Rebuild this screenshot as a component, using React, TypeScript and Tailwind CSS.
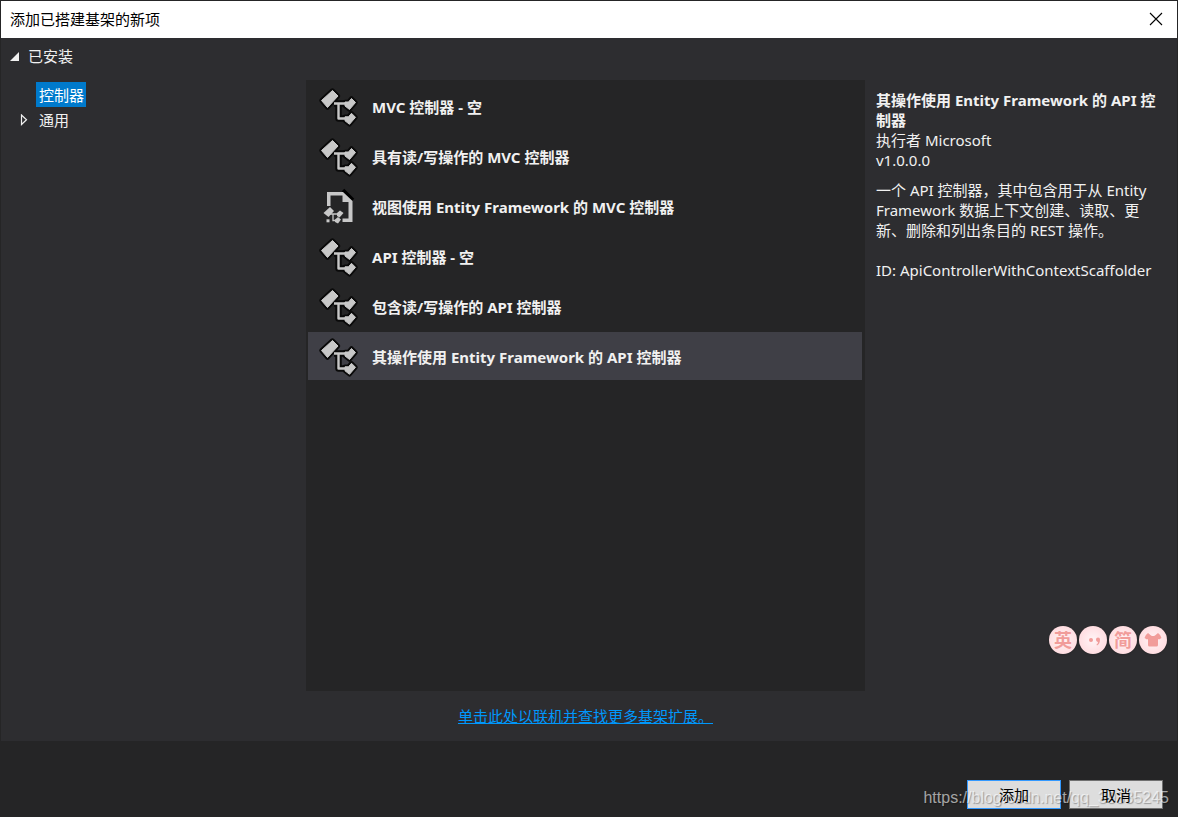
import React, {useState} from "react"
import clsx from "clsx"

type IconKind = "controller" | "view"

interface Scaffold {
    name: string
    icon: IconKind
}

const scaffolds: Scaffold[] = [
    {name: "MVC 控制器 - 空", icon: "controller"},
    {name: "具有读/写操作的 MVC 控制器", icon: "controller"},
    {name: "视图使用 Entity Framework 的 MVC 控制器", icon: "view"},
    {name: "API 控制器 - 空", icon: "controller"},
    {name: "包含读/写操作的 API 控制器", icon: "controller"},
    {name: "其操作使用 Entity Framework 的 API 控制器", icon: "controller"},
]

// Three linked blocks, drawn once as outline and once as fill
function ControllerIcon() {
    const shapes = (
        <>
            <path d="M1.500 14.500 12.500 4.500l5.500 5.500L7.500 21.500z"/>
            <path d="M25 20v-4h3.500l3-3.500 4 4-6 7z"/>
            <path d="M25 34.800v-4h3.500l3-3.500 4 4-6 7z"/>
        </>
    )
    return (
        <svg viewBox="0 0 40 40" className="h-10 w-10 shrink-0 overflow-visible" aria-hidden="true">
            <g fill="#0a0a0a" stroke="#0a0a0a" strokeWidth="4.5" strokeLinejoin="round">
                {shapes}
                <path d="M14 17.500h12M18.500 17.500v15h8" fill="none" strokeWidth="6.500"/>
            </g>
            <g fill="#c8c8c8" stroke="#c8c8c8" strokeWidth="1" strokeLinejoin="round">
                {shapes}
                <path d="M14 17.500h12M18.500 17.500v15h8" fill="none" strokeWidth="2.400"/>
            </g>
        </svg>
    )
}

function ViewIcon() {
    return (
        <svg viewBox="0 0 40 40" className="h-10 w-10 shrink-0" aria-hidden="true">
            <path d="M23 4l10 10" stroke="#000" strokeWidth="3.500"/>
            <path d="M7 20V6h16l9.500 9v21h-10v-3.500h6V16h-6V9.500H10.500V20z" fill="#c8c8c8"/>
            <g fill="#c8c8c8">
                <path d="M3.500 27l6.500-6 4 4-5.500 6z"/>
                <path d="M17 30v-3l3-2.500 3.500 2.500-4 4.500z"/>
                <path d="M15 36v-2.500l3-2.500 3 2.500-3 4z"/>
                <path d="M6.500 33.300h3v3h-3z"/>
                <path d="M9 28h9M13 28v6.500h4" fill="none" stroke="#c8c8c8" strokeWidth="1.300"/>
            </g>
        </svg>
    )
}

function ImeBar() {
    const badge = "flex h-7 w-7 items-center justify-center rounded-full bg-[radial-gradient(#fff4f6,#ffd3d8)] text-lg leading-none font-bold text-[#f19c9a] shadow"
    return (
        <div className="absolute right-2.5 bottom-[162px] flex gap-0.5">
            <button type="button" className={badge}>英</button>
            <button type="button" className={badge} aria-label="标点">
                <svg viewBox="0 0 28 28" className="h-7 w-7" fill="#f19c9a">
                    <circle cx="12" cy="14" r="2"/>
                    <path d="M17 13.500a2 2 0 1 1 4 0c0 3-1 5-3 6l-.5-1c1-.6 1.500-1.500 1.500-2.500-1 0-2-1-2-2.500z"/>
                </svg>
            </button>
            <button type="button" className={badge}>简</button>
            <button type="button" className={badge} aria-label="皮肤">
                <svg viewBox="0 0 28 28" className="h-7 w-7" fill="#f19c9a">
                    <path d="M9 7l3 2.500q2 1 4 0L19 7q3 2 3.500 5l-2.500 1.500-1-.5v6q0 1.500-1.500 1.500h-7Q9 20.500 9 19v-6l-1 .5L5.500 12Q6 9 9 7z"/>
                </svg>
            </button>
        </div>
    )
}

export default function App() {
    const [selected, setSelected] = useState(5)

    return (
        <div className="relative flex min-h-screen flex-col border border-[#252526] bg-[#2d2d30] font-['Noto_Sans','Noto_Sans_CJK_SC',sans-serif] text-[15px] leading-5 text-[#f1f1f1]">
            <header className="flex h-[37px] items-center justify-between bg-white pr-3.5 pl-[9px] text-black">
                <h1 className="pb-0.5">添加已搭建基架的新项</h1>
                <button type="button" aria-label="关闭" className="pb-0.5">
                    <svg viewBox="0 0 14 14" className="h-3.5 w-3.5" stroke="#000" strokeWidth="1.1">
                        <path d="M1 1l12 12M13 1L1 13"/>
                    </svg>
                </button>
            </header>

            <main className="flex flex-1">
                <nav className="w-[305px] shrink-0 pt-2">
                    <button type="button" className="flex items-center gap-[9px] pl-2">
                        <svg viewBox="0 0 10 10" className="h-2.5 w-2.5" fill="#f1f1f1">
                            <path d="M10 1v9H1z"/>
                        </svg>
                        已安装
                    </button>
                    <ul className="mt-4">
                        <li className="pl-[35px]">
                            <button type="button" className="h-[25px] bg-[#007acc] pr-0.5 pl-[3px] text-white">控制器</button>
                        </li>
                        <li>
                            <button type="button" className="flex h-[25px] items-center gap-[11px] pl-[19px]">
                                <svg viewBox="0 0 8 12" className="h-3 w-2" fill="none" stroke="#f1f1f1" strokeWidth="1.2">
                                    <path d="M1.500 1v9.500l5-4.750z"/>
                                </svg>
                                通用
                            </button>
                        </li>
                    </ul>
                </nav>

                <section className="flex min-w-0 flex-1 flex-col pt-[42px]">
                    <ul className="flex-1 bg-[#252526] pt-0.5 pr-[3px] pl-0.5">
                        {scaffolds.map((item, index) => (
                            <li key={item.name} className="pb-0.5">
                                <button
                                    type="button"
                                    onClick={() => setSelected(index)}
                                    className={clsx(
                                        "flex h-12 w-full items-center gap-3 pl-3 text-left font-bold",
                                        selected === index && "bg-[#3f3f46]"
                                    )}
                                >
                                    {item.icon === "view" ? <ViewIcon/> : <ControllerIcon/>}
                                    <span className="pt-0.5">{item.name}</span>
                                </button>
                            </li>
                        ))}
                    </ul>
                    <div className="flex h-[50px] items-center justify-center">
                        <a href="#" className="text-[#0097fb] underline">单击此处以联机并查找更多基架扩展。</a>
                    </div>
                </section>

                <aside className="w-[312px] shrink-0 pt-[52px] pr-2 pl-[11px]">
                    <h2 className="font-bold">其操作使用 Entity Framework 的 API 控制器</h2>
                    <p>执行者 Microsoft</p>
                    <p>v1.0.0.0</p>
                    <p className="mt-2.5">一个 API 控制器，其中包含用于从 Entity Framework 数据上下文创建、读取、更新、删除和列出条目的 REST 操作。</p>
                    <p className="mt-5">ID: ApiControllerWithContextScaffolder</p>
                </aside>
            </main>

            <footer className="flex h-[75px] items-end justify-end gap-2 bg-[#252526] pr-3.5 pb-[7px] text-black">
                <button type="button" className="h-[29px] w-[94px] border border-[#3399ff] bg-[#dddddd]">
                    <span className="relative z-10">添加</span>
                </button>
                <button type="button" className="h-[29px] w-[94px] border border-[#707070] bg-[#dddddd]">
                    <span className="relative z-10">取消</span>
                </button>
            </footer>

            <ImeBar/>
            <span className="pointer-events-none absolute right-2 bottom-2 font-['Liberation_Sans',sans-serif] text-base leading-5 text-white/60 [text-shadow:1px_1px_1px_rgb(0_0_0/0.3)]">
                https://blog.csdn.net/qq_39335245
            </span>
        </div>
    )
}
